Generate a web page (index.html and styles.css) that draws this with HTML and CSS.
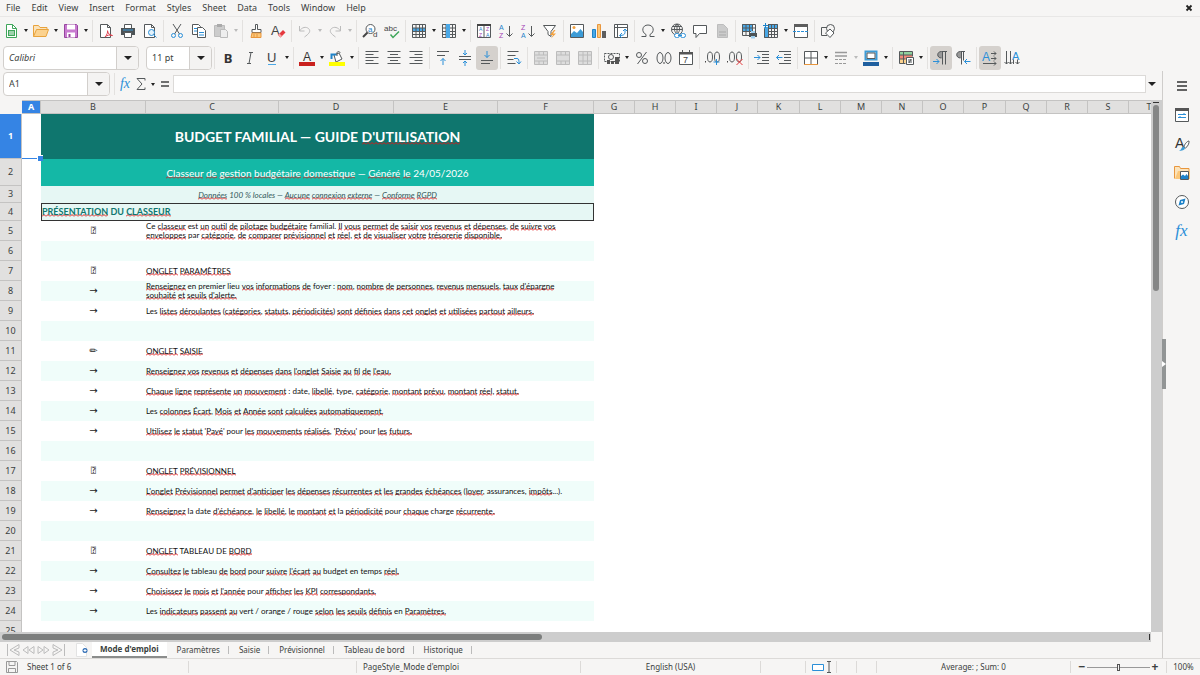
FILE: index.html
```html
<!DOCTYPE html>
<html lang="fr">
<head>
<meta charset="UTF-8" />
<meta name="viewport" content="width=device-width, initial-scale=1" />
<title>Budget familial - Mode d'emploi</title>
<link rel="stylesheet" href="styles.css">
</head>
<body>

<nav class="menubar">
  <button>File</button>
  <button>Edit</button>
  <button>View</button>
  <button>Insert</button>
  <button>Format</button>
  <button>Styles</button>
  <button>Sheet</button>
  <button>Data</button>
  <button>Tools</button>
  <button>Window</button>
  <button>Help</button>
  <button class="close" aria-label="Close">
    <svg viewBox="0 0 8 8" width="8" height="8"><path d="M1.5 1.5l5 5M6.5 1.5l-5 5" stroke="#222" stroke-width="1.8"/></svg>
  </button>
</nav>

<!-- Standard toolbar -->
<div class="toolbar">
  <button aria-label="New"><svg class="ico" viewBox="0 0 16 16"><path class="gr" d="M3.5 1.5h6l4 4v9h-10z" fill="#fff"/><path class="gr" d="M9.5 1.5v4h4"/><path d="M5 7h7v6H5z" fill="#3fa65a"/><path d="M6 9h5M6 11h5" stroke="#fff"/></svg></button>
  <button class="caret" aria-label="New menu"></button>
  <button aria-label="Open"><svg class="ico" viewBox="0 0 16 16"><path d="M.5 13.5v-11h5l1.5 2h7v3" fill="#fbe3bb" stroke="#e8a33d"/><path d="M.5 13.5l3-7h12l-2.5 7z" fill="#fbd28f" stroke="#e8a33d"/></svg></button>
  <button class="caret" aria-label="Open menu"></button>
  <button aria-label="Save"><svg class="ico" viewBox="0 0 16 16"><path d="M1.5 1.5h12l1 1v12h-13z" fill="#c87bd0" stroke="#97459f"/><path d="M4 1.5h8v5H4z" fill="#fff"/><path d="M4 9.5h8v5H4z" fill="#fff"/><path d="M5.5 11h2v3h-2z" fill="#97459f"/></svg></button>
  <button class="caret" aria-label="Save menu"></button>
  <span class="sep"></span>
  <button aria-label="Export as PDF"><svg class="ico" viewBox="0 0 16 16"><path class="k" d="M2.5 1.5h7l3 3v10h-10z" fill="#fff"/><path class="k" d="M9.5 1.5v3h3"/><path d="M7 14c2-2 3-5 2.5-6.5M9.5 8c.5 3 3 4.5 5 4.5M7 14c2-2 5-2.5 7.5-1.5" stroke="#e0414f"/></svg></button>
  <button aria-label="Print"><svg class="ico" viewBox="0 0 16 16"><path class="k" d="M4.5 5v-3.5h7V5" fill="#fff"/><path d="M1 5h14v7H1z" fill="#4d5356"/><path d="M3 7h10" stroke="#3c9bd6"/><path class="k" d="M4.5 9.5h7v5h-7z" fill="#fff"/></svg></button>
  <button aria-label="Print preview"><svg class="ico" viewBox="0 0 16 16"><path class="k" d="M2.5 1.5h7l3 3v10h-10z" fill="#fff"/><path class="k" d="M9.5 1.5v3h3"/><circle class="b" cx="9.5" cy="9.5" r="3" fill="#e4f2fb"/><path class="b" d="M11.5 11.5l3 3"/></svg></button>
  <span class="sep"></span>
  <button aria-label="Cut"><svg class="ico" viewBox="0 0 16 16"><path class="k" d="M4 1l6.5 10M12 1L5.5 11"/><circle class="b" cx="4.5" cy="12.5" r="2"/><circle class="b" cx="11.5" cy="12.5" r="2"/></svg></button>
  <button aria-label="Copy"><svg class="ico" viewBox="0 0 16 16"><path class="k" d="M1.5 1.5h6l2 2v8h-8z" fill="#fff"/><path class="k" d="M6.5 4.5h5l3 3v7h-8z" fill="#fff"/><path class="b" d="M3 5.5h3M3 8h3M8 9.5h5M8 12h5"/></svg></button>
  <button aria-label="Paste" disabled><svg class="ico" viewBox="0 0 16 16"><path d="M1.5 2.5h10v11h-10z" fill="#ccc" stroke="#bbb"/><path d="M4 1h5v3H4z" fill="#aaa"/><path d="M7.5 6.5h5l2 2v6h-7z" fill="#eee" stroke="#bbb"/></svg></button>
  <button class="caret off" aria-label="Paste menu" disabled></button>
  <span class="sep"></span>
  <button aria-label="Clone formatting"><svg class="ico" viewBox="0 0 16 16"><path class="k" d="M7.5 1.5h2v5h3.5v3H4v-3h3.5z" fill="#fff"/><path d="M4 10h9v4.5H3z" fill="#fbc77a" stroke="#e8963d"/><path d="M6 11v3M9 11v3" stroke="#e8963d"/></svg></button>
  <button aria-label="Clear formatting"><svg class="ico" viewBox="0 0 16 16"><text x="1" y="12" font-size="13" fill="#444">A</text><path d="M8 12l5-5 2.5 2.5-5 5z" fill="#e5383d"/><path d="M8 12l1.5-1.5L12 13l-1.5 1.5z" fill="#f4a3a6"/></svg></button>
  <span class="sep"></span>
  <button aria-label="Undo" disabled><svg class="ico" viewBox="0 0 16 16"><path class="g" d="M2.5 3v5h5M2.5 8C5 4 9 3.5 11.5 5.5c3 3 0 5.5-4 8.5"/></svg></button>
  <button class="caret off" aria-label="Undo list" disabled></button>
  <button aria-label="Redo" disabled><svg class="ico" viewBox="0 0 16 16"><path class="g" d="M13.5 3v5h-5M13.5 8C11 4 7 3.5 4.5 5.5c-3 3 0 5.5 4 8.5"/></svg></button>
  <button class="caret off" aria-label="Redo list" disabled></button>
  <span class="sep"></span>
  <button aria-label="Find and replace"><svg class="ico" viewBox="0 0 16 16"><circle class="k" cx="8.5" cy="6" r="4.5" fill="#fff"/><path d="M5.5 9.5L1 14" stroke="#444" stroke-width="2"/><text x="6" y="8.5" font-size="8" fill="#1f83c9">a</text><text x="11" y="14" font-size="8" fill="#444">d</text></svg></button>
  <button aria-label="Spelling"><svg class="ico" viewBox="0 0 16 16"><text x="0" y="8" font-size="8" fill="#444">abc</text><path d="M6.5 11.5l2.5 3 6-6" stroke="#3fa65a" stroke-width="1.5"/></svg></button>
  <span class="sep"></span>
  <button aria-label="Row"><svg class="ico" viewBox="0 0 16 16"><path d="M1 5h14v3H1z" fill="#4aa8e6"/><path class="k" d="M1.5 1.5h13v13h-13zM1.5 5h13M1.5 8.5h13M1.5 11.5h13M5 1.5v13M8.5 1.5v13M11.5 1.5v13"/></svg></button>
  <button class="caret" aria-label="Row menu"></button>
  <button aria-label="Column"><svg class="ico" viewBox="0 0 16 16"><path class="k" d="M1.5 1.5h13v13h-13zM1.5 5h13M1.5 8.5h13M1.5 11.5h13M5 1.5v13M11.5 1.5v13"/><path d="M5 1h4v14H5z" fill="#4aa8e6"/></svg></button>
  <button class="caret" aria-label="Column menu"></button>
  <span class="sep"></span>
  <button aria-label="Sort"><svg class="ico" viewBox="0 0 16 16"><path class="k" d="M1.5 1.5h13v13h-13z" fill="#fff"/><path d="M1 1h14v2H1z" fill="#444"/><path class="k" d="M8 3v11"/><text x="3" y="8" font-size="5" fill="#1f83c9">A</text><text x="3" y="14" font-size="5" fill="#a33fb5">Z</text><text x="10" y="8" font-size="5" fill="#a33fb5">Z</text><text x="10" y="14" font-size="5" fill="#1f83c9">A</text></svg></button>
  <button aria-label="Sort ascending"><svg class="ico" viewBox="0 0 16 16"><text x="1" y="7" font-size="7" fill="#1f83c9">A</text><text x="1" y="15" font-size="7" fill="#a33fb5">Z</text><path class="k" d="M11.5 3v10M8.5 10.5l3 3 3-3"/></svg></button>
  <button aria-label="Sort descending"><svg class="ico" viewBox="0 0 16 16"><text x="1" y="7" font-size="7" fill="#a33fb5">Z</text><text x="1" y="15" font-size="7" fill="#1f83c9">A</text><path class="k" d="M11.5 3v10M8.5 10.5l3 3 3-3"/></svg></button>
  <button aria-label="AutoFilter"><svg class="ico" viewBox="0 0 16 16"><path class="k" d="M1.5 2.5h12l-4.5 6v5l-3-2v-3z" fill="#fff"/><path d="M12 7l-4 5h3l-2 3.5 5-5h-3l2.5-3.5z" fill="#f2a03d"/></svg></button>
  <span class="sep"></span>
  <button aria-label="Insert image"><svg class="ico" viewBox="0 0 16 16"><path class="k" d="M1.5 1.5h13v13h-13z" fill="#fff"/><path d="M2 14v-3l3-3 3 2 3.5-4L14 9v5z" fill="#3c9bd6"/><circle cx="5" cy="4.5" r="1.5" fill="#f2a03d"/></svg></button>
  <button aria-label="Insert chart"><svg class="ico" viewBox="0 0 16 16"><path d="M1.5 6.5h3v8h-3z" fill="#4aa8e6" stroke="#1f83c9"/><path d="M6.5 1.5h3v13h-3z" fill="#fbc77a" stroke="#e8963d"/><path d="M11 8h4v7h-4z" fill="#5e5e5e"/></svg></button>
  <button aria-label="Pivot table"><svg class="ico" viewBox="0 0 16 16"><path class="k" d="M1.5 1.5h13v13h-13z" fill="#fff"/><path class="k" d="M1.5 4.5h13M4.5 1.5v13"/><path class="b" d="M12 6v3.5c0 2-2 3-5 3M10 8l2-2 2 2M9 10l-2.5 2.5L9 15"/></svg></button>
  <span class="sep"></span>
  <button aria-label="Special character"><svg class="ico" viewBox="0 0 16 16"><path class="k" d="M1.5 13.5h4.5v-2C1 9 2 2 8 2s7 7 2 9.5v2h4.5"/></svg></button>
  <button class="caret" aria-label="Special character menu"></button>
  <button aria-label="Hyperlink"><svg class="ico" viewBox="0 0 16 16"><circle class="k" cx="7" cy="6.5" r="5.5"/><path class="k" d="M1.5 6.5h11M2.5 3.5h9M7 1v10M7 1C3.5 4 3.5 8 7 11M7 1c3.5 3 3.5 7 0 10"/><rect x="4.5" y="10.5" width="5" height="4" rx="2" fill="#fff" stroke="#2a8fd8"/><rect x="10.5" y="10.5" width="5" height="4" rx="2" fill="#fff" stroke="#2a8fd8"/><path class="b" d="M8 12.5h4"/></svg></button>
  <button aria-label="Comment"><svg class="ico" viewBox="0 0 16 16"><path class="k" d="M1.5 2.5h13v8h-7l-3.5 4v-4H1.5z" fill="#fff"/></svg></button>
  <button aria-label="Headers and footers" disabled><svg class="ico" viewBox="0 0 16 16"><path d="M3.5 1.5h6l4 4v9h-10z" fill="#ccc" stroke="#bdbdbd"/><path d="M5 9h7M5 12h7" stroke="#aaa"/></svg></button>
  <span class="sep"></span>
  <button aria-label="Define print area"><svg class="ico" viewBox="0 0 16 16"><path d="M1 1h10v7H1z" fill="#4aa8e6"/><path class="k" d="M1.5 1.5h13v11h-13zM1.5 5h13M1.5 8.5h13M5 1.5v11M8.5 1.5v11M11.5 1.5v11"/><path d="M8 10h8v4H8z" fill="#4d5356"/><path d="M10 8h4v2h-4zM10 13h4v2.5h-4z" fill="#9fd0f0"/></svg></button>
  <button aria-label="Freeze rows and columns"><svg class="ico" viewBox="0 0 16 16"><path d="M1 4h4v11H1zM5 1h10v4H5z" fill="#4aa8e6"/><path class="k" d="M5.5 1.5h9v13h-13v-9M5 5.5h10M5 8.5h10M5 11.5h10M5.5 1v14M8.5 1v14M11.5 1v14"/><path d="M2.5 0v5M0 2.5h5" stroke="#1f83c9"/></svg></button>
  <button class="caret" aria-label="Freeze menu"></button>
  <button aria-label="Split window"><svg class="ico" viewBox="0 0 16 16"><path class="k" d="M1.5 1.5h13v13h-13z" fill="#fff"/><path d="M1 1h14v3H1z" fill="#5e5e5e"/><path class="b" d="M0 8.5h16" stroke-dasharray="3 1"/></svg></button>
  <span class="sep"></span>
  <button aria-label="Show draw functions"><svg class="ico" viewBox="0 0 16 16"><path class="k" d="M7 12.5H1.5v-8H7"/><circle class="k" cx="10.5" cy="5.5" r="4"/><path class="k" d="M10 6l4 4-4 4.5L5.5 10z" fill="#fff"/></svg></button>
</div>

<!-- Formatting toolbar -->
<div class="toolbar">
  <div class="combo combo-font">
    <input class="italic" type="text" value="Calibri" aria-label="Font name">
    <button aria-label="Font list"></button>
  </div>
  <div class="combo combo-size">
    <input type="text" value="11 pt" aria-label="Font size">
    <button aria-label="Size list"></button>
  </div>
  <span class="sep"></span>
  <button class="bold" aria-label="Bold">B</button>
  <button aria-label="Italic"><svg class="ico" viewBox="0 0 16 16"><path class="k" d="M7 2.5h4M5 13.5h4M9 2.5l-2 11"/></svg></button>
  <button aria-label="Underline"><svg class="ico" viewBox="0 0 16 16"><text x="3" y="12" font-size="13" fill="#444">U</text><path d="M4 14.5h8" stroke="#4aa8e6"/></svg></button>
  <button class="caret" aria-label="Underline menu"></button>
  <span class="sep"></span>
  <button aria-label="Font color"><svg class="ico" viewBox="0 0 16 16"><text x="4" y="11" font-size="12" fill="#333">A</text><path d="M0 12h16v4H0z" fill="#c9211e"/></svg></button>
  <button class="caret" aria-label="Font color menu"></button>
  <button aria-label="Highlighting"><svg class="ico" viewBox="0 0 16 16"><path class="k" d="M5 5l5-2 3 6-6 3z" fill="#fff"/><path d="M2.5 9V4.5h5" stroke="#1f83c9" stroke-width="2"/><path class="k" d="M8 6V3c0-2 3-2 3 0"/><path d="M0 12h16v4H0z" fill="#ff0"/></svg></button>
  <button class="caret" aria-label="Highlighting menu"></button>
  <span class="sep"></span>
  <button aria-label="Align left"><svg class="ico" viewBox="0 0 16 16"><path class="k" d="M1.5 1.5h13M1.5 4.5h8M1.5 7.5h13M1.5 10.5h8M1.5 13.5h13"/></svg></button>
  <button aria-label="Center"><svg class="ico" viewBox="0 0 16 16"><path class="k" d="M1.5 1.5h13M4 4.5h8M1.5 7.5h13M4 10.5h8M1.5 13.5h13"/></svg></button>
  <button aria-label="Align right"><svg class="ico" viewBox="0 0 16 16"><path class="k" d="M1.5 1.5h13M6.5 4.5h8M1.5 7.5h13M6.5 10.5h8M1.5 13.5h13"/></svg></button>
  <span class="sep"></span>
  <button aria-label="Align top"><svg class="ico" viewBox="0 0 16 16"><path class="k" d="M2 1.5h12M2 5.5h8"/><path class="b" d="M8 15V8.5M5.5 11L8 8.5l2.5 2.5"/></svg></button>
  <button aria-label="Center vertically"><svg class="ico" viewBox="0 0 16 16"><path class="k" d="M2 6.5h12M2 9.5h12"/><path class="b" d="M8 0v5M6 3l2 2 2-2M8 16v-5M6 13l2-2 2 2"/></svg></button>
  <button class="active" aria-label="Align bottom"><svg class="ico" viewBox="0 0 16 16"><path class="k" d="M2 10.5h12M2 13.5h9"/><path class="b" d="M8 1v6.5M5.5 5L8 7.5 10.5 5"/></svg></button>
  <span class="sep"></span>
  <button aria-label="Wrap text"><svg class="ico" viewBox="0 0 16 16"><path class="k" d="M1.5 1.5h11M1.5 5.5h8M1.5 9.5h6M1.5 13.5h8"/><path class="b" d="M8 8.5h3c2 0 2 2 2 5M10.5 11.5l2.5 2.5 2-2.5"/></svg></button>
  <span class="sep"></span>
  <button aria-label="Merge and center" disabled><svg class="ico" viewBox="0 0 16 16"><path class="g" d="M1.5 1.5h13v13h-13zM1.5 5h13M1.5 11h13M6 1.5V5M10.5 1.5V5M6 11v3.5M10.5 11v3.5" fill="#ddd"/><path class="g" d="M4 8h8"/></svg></button>
  <button aria-label="Merge cells" disabled><svg class="ico" viewBox="0 0 16 16"><path class="g" d="M1.5 1.5h13v13h-13zM1.5 5h13M1.5 11h13M6 1.5V5M10.5 1.5V5M6 11v3.5M10.5 11v3.5" fill="#ddd"/></svg></button>
  <button aria-label="Unmerge cells" disabled><svg class="ico" viewBox="0 0 16 16"><path class="g" d="M1.5 1.5h13v13h-13zM1.5 5h13M1.5 11h13M6 1.5v13M10.5 1.5v13" fill="#ddd"/></svg></button>
  <span class="sep"></span>
  <button aria-label="Currency"><svg class="ico" viewBox="0 0 16 16"><path class="k" d="M.5 3.5h15v8H.5z" stroke-dasharray="2 1"/><circle class="k" cx="7" cy="7" r="2.5"/><path d="M3 10h3v4H3zM7 11h3v3H7zM11 7h4v7h-4z" fill="#555"/></svg></button>
  <button class="caret" aria-label="Currency menu"></button>
  <button aria-label="Percent"><svg class="ico" viewBox="0 0 16 16"><circle class="k" cx="5" cy="5" r="2.5"/><circle class="k" cx="11" cy="11" r="2.5"/><path class="k" d="M12.5 2l-9 12"/></svg></button>
  <button aria-label="Number"><svg class="ico" viewBox="0 0 16 16"><ellipse class="k" cx="4" cy="8" rx="3" ry="5.5"/><ellipse class="k" cx="12" cy="8" rx="3" ry="5.5"/><path d="M7.5 12h1v2h-1z" fill="#444"/></svg></button>
  <button aria-label="Date"><svg class="ico" viewBox="0 0 16 16"><path class="k" d="M1.5 2.5h13v12h-13z" fill="#fff"/><path d="M1 2h14v2.5H1z" fill="#555"/><path class="k" d="M4.5 0v3M11.5 0v3"/><text x="5" y="13" font-size="9" fill="#444">7</text></svg></button>
  <span class="sep"></span>
  <button aria-label="Add decimal place"><svg class="ico" viewBox="0 0 16 16"><ellipse class="k" cx="5" cy="7" rx="2.5" ry="5"/><ellipse class="k" cx="12" cy="7" rx="2.5" ry="5"/><path d="M0 11h1v1.5H0z" fill="#444"/><path class="b" d="M11.5 9v6M8.5 12h6"/></svg></button>
  <button aria-label="Delete decimal place"><svg class="ico" viewBox="0 0 16 16"><ellipse class="k" cx="5" cy="7" rx="2.5" ry="5"/><ellipse class="k" cx="12" cy="7" rx="2.5" ry="5"/><path d="M0 11h1v1.5H0z" fill="#444"/><path d="M9.5 9l6 6M15.5 9l-6 6" stroke="#e5383d"/></svg></button>
  <span class="sep"></span>
  <button aria-label="Increase indent"><svg class="ico" viewBox="0 0 16 16"><path class="k" d="M3 1.5h12M8 4.5h7M8 7.5h7M8 10.5h7M3 13.5h12"/><path class="b" d="M0 7.5h6M3.5 5L6 7.5 3.5 10"/></svg></button>
  <button aria-label="Decrease indent"><svg class="ico" viewBox="0 0 16 16"><path class="k" d="M3 1.5h12M8 4.5h7M8 7.5h7M8 10.5h7M3 13.5h12"/><path class="b" d="M.5 7.5h6M3 5L.5 7.5 3 10"/></svg></button>
  <span class="sep"></span>
  <button aria-label="Borders"><svg class="ico" viewBox="0 0 16 16"><path class="k" d="M1.5 14V1.5h13V14M8 1.5V14M1.5 8h13" fill="#fff"/><path d="M1 14.5h14" stroke="#e8963d"/></svg></button>
  <button class="caret" aria-label="Borders menu"></button>
  <button aria-label="Border style" disabled><svg class="ico" viewBox="0 0 16 16"><path d="M2 2.5h12M2 6h12" stroke="#999" stroke-width="1.5"/><path d="M2 9.5h12M2 13.5h12" stroke="#999" stroke-dasharray="3 1"/></svg></button>
  <button class="caret off" aria-label="Border style menu" disabled></button>
  <button aria-label="Border color"><svg class="ico" viewBox="0 0 16 16"><path d="M2.5 1.5h11v8h-11z" fill="#fff" stroke="#3c9bd6" stroke-width="2"/><path class="k" d="M4 3h8v5.5H4z"/><path d="M0 12h16v4H0z" fill="#1f5f9f"/></svg></button>
  <button class="caret" aria-label="Border color menu"></button>
  <span class="sep"></span>
  <button aria-label="Conditional formatting"><svg class="ico" viewBox="0 0 16 16"><path d="M1 2h13v3H1z" fill="#8fd19e"/><path d="M1 5h13v4H1z" fill="#f08a7a"/><path d="M1 9h7v4H1z" fill="#fbd28f"/><path class="k" d="M1.5 1.5h13v5M1.5 1.5v12h6M1.5 5h13M1.5 9h6M5.5 1.5v12"/><path class="k" d="M8.5 7.5h7v7h-7z" fill="#fff"/><path class="k" d="M10 10h4M10 12h4M13 9l-2 4"/></svg></button>
  <button class="caret" aria-label="Conditional menu"></button>
  <span class="sep"></span>
  <button class="active" aria-label="Left to right"><svg class="ico" viewBox="0 0 16 16"><path d="M9 1.5C3 1.5 3 8 9 8z" fill="#999"/><path class="k" d="M14 1.5H8.5c-5 0-5 6.5 0 6.5M9.5 1.5v13M12.5 1.5v13"/><path class="b" d="M0 11.5h6M3.5 9L6 11.5 3.5 14"/></svg></button>
  <button aria-label="Right to left"><svg class="ico" viewBox="0 0 16 16"><path d="M6 1.5C0 1.5 0 8 6 8z" fill="#999"/><path class="k" d="M10 1.5H5.5c-5 0-5 6.5 0 6.5M6.5 1.5v13M8.5 1.5v9"/><path class="b" d="M9.5 11.5h6M12 9l-2.5 2.5L12 14"/></svg></button>
  <span class="sep"></span>
  <button class="active" aria-label="Horizontal text"><svg class="ico" viewBox="0 0 16 16"><text x="0" y="11" font-size="12" fill="#2a8fd8">A</text><path class="k" d="M9 3.5h5M9 8.5h5M1 13.5h13M12 1.5l2 2-2 2M12 6.5l2 2-2 2M12 11.5l2 2-2 2"/></svg></button>
  <button aria-label="Vertical text"><svg class="ico" viewBox="0 0 16 16"><text x="8" y="10" font-size="11" fill="#2a8fd8">A</text><path class="k" d="M2.5 1v13M6.5 1v13M13.5 9.5v4.5M9.5 9.5v4.5M.5 12l2 2 2-2M4.5 12l2 2 2-2M11.5 12l2 2 2-2"/></svg></button>
</div>

<div class="main">
  <div class="work">

    <div class="formulabar">
      <div class="combo combo-name">
        <input type="text" value="A1" aria-label="Name box">
        <button aria-label="Named ranges"></button>
      </div>
      <span class="sep"></span>
      <button class="fx" aria-label="Function wizard">fx</button>
      <button class="small" aria-label="Select function"><svg viewBox="0 0 10 14" width="10" height="14"><path class="k" d="M9 3.5V1.5H1l5 5.5-5 5.5h8v-2"/></svg></button>
      <button class="caret" aria-label="Function menu"></button>
      <button class="small" aria-label="Formula"><svg viewBox="0 0 10 14" width="10" height="14"><path d="M1 5h8M1 9h8" stroke="#444" stroke-width="1.5"/></svg></button>
      <input class="formula" type="text" aria-label="Input line">
      <button class="caret big" aria-label="Expand formula bar"></button>
    </div>

    <div class="gridrow">
      <div class="grid">
        <table class="sheet">
          <colgroup>
            <col class="c-head"><col class="c-a"><col class="c-b"><col class="c-c"><col class="c-d"><col class="c-e"><col class="c-f">
            <col class="c-n" span="4"><col class="c-w"><col class="c-n" span="4"><col class="c-w"><col class="c-n" span="4">
          </colgroup>
          <thead>
            <tr><td class="corner"></td><th class="sel">A</th><th>B</th><th>C</th><th>D</th><th>E</th><th>F</th><th>G</th><th>H</th><th>I</th><th>J</th><th>K</th><th>L</th><th>M</th><th>N</th><th>O</th><th>P</th><th>Q</th><th>R</th><th>S</th><th>T</th></tr>
          </thead>
          <tbody>
            <tr class="r1"><th class="sel">1</th><td class="cursor"></td><td class="title" colspan="5">BUDGET FAMILIAL — GUIDE <u>D'UTILISATION</u></td></tr>
            <tr class="r2"><th>2</th><td></td><td class="subtitle" colspan="5"><u>Classeur</u> <u>de</u> <u>gestion</u> <u>budgétaire</u> <u>domestique</u> — <u>Généré</u> <u>le</u> 24/05/2026</td></tr>
            <tr class="r3"><th>3</th><td></td><td class="note" colspan="5"><u>Données</u> 100 % locales — <u>Aucune</u> <u>connexion</u> <u>externe</u> — <u>Conforme</u> <u>RGPD</u></td></tr>
            <tr class="r4"><th>4</th><td></td><td class="section" colspan="5"><u>PRÉSENTATION</u> DU <u>CLASSEUR</u></td></tr>
            <tr><th>5</th><td></td><td class="mark box">⍰</td><td class="text" colspan="4">Ce <u>classeur</u> est <u>un</u> <u>outil</u> <u>de</u> <u>pilotage</u> <u>budgétaire</u> familial. <u>Il</u> <u>vous</u> <u>permet</u> <u>de</u> <u>saisir</u> <u>vos</u> <u>revenus</u> <u>et</u> <u>dépenses</u>, <u>de</u> <u>suivre</u> <u>vos</u><br><u>enveloppes</u> par <u>catégorie</u>, <u>de</u> <u>comparer</u> <u>prévisionnel</u> <u>et</u> <u>réel</u>, <u>et</u> <u>de</u> <u>visualiser</u> <u>votre</u> <u>trésorerie</u> <u>disponible.</u></td></tr>
            <tr class="tint"><th>6</th><td></td><td></td><td colspan="4"></td></tr>
            <tr><th>7</th><td></td><td class="mark box">⍰</td><td class="text" colspan="4"><u>ONGLET</u> <u>PARAMÈTRES</u></td></tr>
            <tr class="tint"><th>8</th><td></td><td class="mark">→</td><td class="text" colspan="4"><u>Renseignez</u> en premier lieu <u>vos</u> <u>informations</u> <u>de</u> foyer : <u>nom</u>, <u>nombre</u> <u>de</u> <u>personnes</u>, <u>revenus</u> <u>mensuels</u>, <u>taux</u> <u>d'épargne</u><br><u>souhaité</u> <u>et</u> <u>seuils</u> <u>d'alerte.</u></td></tr>
            <tr><th>9</th><td></td><td class="mark">→</td><td class="text" colspan="4">Les <u>listes</u> <u>déroulantes</u> (<u>catégories</u>, <u>statuts</u>, <u>périodicités</u>) <u>sont</u> <u>définies</u> <u>dans</u> <u>cet</u> <u>onglet</u> <u>et</u> <u>utilisées</u> <u>partout</u> <u>ailleurs.</u></td></tr>
            <tr class="tint"><th>10</th><td></td><td></td><td colspan="4"></td></tr>
            <tr><th>11</th><td></td><td class="mark">✏</td><td class="text" colspan="4"><u>ONGLET</u> <u>SAISIE</u></td></tr>
            <tr class="tint"><th>12</th><td></td><td class="mark">→</td><td class="text" colspan="4"><u>Renseignez</u> <u>vos</u> <u>revenus</u> <u>et</u> <u>dépenses</u> <u>dans</u> <u>l'onglet</u> <u>Saisie</u> <u>au</u> <u>fil</u> <u>de</u> <u>l'eau.</u></td></tr>
            <tr><th>13</th><td></td><td class="mark">→</td><td class="text" colspan="4"><u>Chaque</u> <u>ligne</u> <u>représente</u> <u>un</u> <u>mouvement</u> : date, <u>libellé</u>, type, <u>catégorie</u>, <u>montant</u> <u>prévu</u>, <u>montant</u> <u>réel</u>, <u>statut.</u></td></tr>
            <tr class="tint"><th>14</th><td></td><td class="mark">→</td><td class="text" colspan="4">Les <u>colonnes</u> <u>Écart</u>, <u>Mois</u> <u>et</u> <u>Année</u> <u>sont</u> <u>calculées</u> <u>automatiquement.</u></td></tr>
            <tr><th>15</th><td></td><td class="mark">→</td><td class="text" colspan="4"><u>Utilisez</u> <u>le</u> <u>statut</u> '<u>Payé</u>' pour <u>les</u> <u>mouvements</u> <u>réalisés</u>, '<u>Prévu</u>' pour <u>les</u> <u>futurs.</u></td></tr>
            <tr class="tint"><th>16</th><td></td><td></td><td colspan="4"></td></tr>
            <tr><th>17</th><td></td><td class="mark box">⍰</td><td class="text" colspan="4"><u>ONGLET</u> <u>PRÉVISIONNEL</u></td></tr>
            <tr class="tint"><th>18</th><td></td><td class="mark">→</td><td class="text" colspan="4"><u>L'onglet</u> <u>Prévisionnel</u> <u>permet</u> <u>d'anticiper</u> <u>les</u> <u>dépenses</u> <u>récurrentes</u> <u>et</u> <u>les</u> <u>grandes</u> <u>échéances</u> (<u>loyer</u>, assurances, <u>impôts</u>...).</td></tr>
            <tr><th>19</th><td></td><td class="mark">→</td><td class="text" colspan="4"><u>Renseignez</u> la date <u>d'échéance</u>, <u>le</u> <u>libellé</u>, <u>le</u> <u>montant</u> <u>et</u> la <u>périodicité</u> pour <u>chaque</u> charge <u>récurrente.</u></td></tr>
            <tr class="tint"><th>20</th><td></td><td></td><td colspan="4"></td></tr>
            <tr><th>21</th><td></td><td class="mark box">⍰</td><td class="text" colspan="4"><u>ONGLET</u> TABLEAU DE <u>BORD</u></td></tr>
            <tr class="tint"><th>22</th><td></td><td class="mark">→</td><td class="text" colspan="4"><u>Consultez</u> <u>le</u> tableau <u>de</u> <u>bord</u> pour <u>suivre</u> <u>l'écart</u> <u>au</u> budget en temps <u>réel.</u></td></tr>
            <tr><th>23</th><td></td><td class="mark">→</td><td class="text" colspan="4"><u>Choisissez</u> <u>le</u> <u>mois</u> <u>et</u> <u>l'année</u> pour <u>afficher</u> <u>les</u> <u>KPI</u> <u>correspondants.</u></td></tr>
            <tr class="tint"><th>24</th><td></td><td class="mark">→</td><td class="text" colspan="4">Les <u>indicateurs</u> <u>passent</u> <u>au</u> vert / orange / rouge <u>selon</u> <u>les</u> <u>seuils</u> <u>définis</u> en <u>Paramètres.</u></td></tr>
            <tr><th>25</th><td></td><td></td><td colspan="4"></td></tr>
          </tbody>
        </table>
      </div>
      <div class="vscroll"><div class="thumb"></div></div>
    </div>

    <div class="hscroll"><div class="thumb"></div></div>

    <div class="tabs">
      <button class="nav" aria-label="First sheet" disabled><svg viewBox="0 0 15 14" width="15" height="14"><path class="g" d="M1.5 1v12M13 1.5L4 7l9 5.5V9L8 7l5-2z"/></svg></button>
      <button class="nav" aria-label="Previous sheet" disabled><svg viewBox="0 0 15 14" width="15" height="14"><path class="g" d="M7 3.5L2 7l5 3.5zM13 3.5L8 7l5 3.5z"/></svg></button>
      <button class="nav" aria-label="Next sheet" disabled><svg viewBox="0 0 15 14" width="15" height="14"><path class="g" d="M2 3.5L7 7l-5 3.5zM8 3.5L13 7l-5 3.5z"/></svg></button>
      <button class="nav" aria-label="Last sheet" disabled><svg viewBox="0 0 15 14" width="15" height="14"><path class="g" d="M13.5 1v12M2 1.5L11 7l-9 5.5V9l5-2-5-2z"/></svg></button>
      <button class="add" aria-label="Add sheet"><svg viewBox="0 0 12 14" width="12" height="14"><path d="M.5.5h6l4 4v9H.5z" fill="#fff" stroke="#e3e3e3"/><circle cx="9" cy="7.5" r="2.5" fill="#2f6db5"/><path d="M9 6v3M7.5 7.5h3" stroke="#fff"/></svg></button>
      <button class="tab current">Mode d'emploi</button>
      <button class="tab">Paramètres</button>
      <button class="tab">Saisie</button>
      <button class="tab">Prévisionnel</button>
      <button class="tab">Tableau de bord</button>
      <button class="tab">Historique</button>
    </div>
  </div>

  <div class="sidebar">
    <button aria-label="Sidebar settings"><svg class="ico" viewBox="0 0 16 16"><path d="M3 4h10M3 8h10M3 12h10" stroke="#333" stroke-width="1.5"/></svg></button>
    <button aria-label="Properties"><svg class="ico" viewBox="0 0 16 16"><path class="k" d="M1.5 1.5h13v13h-13z" fill="#fff"/><path d="M1 1h14v3H1z" fill="#555"/><path class="b" d="M4 7.5h8M4 10.5h8M9.5 6l1.5 1.5M6.5 9L5 10.5"/></svg></button>
    <button aria-label="Styles"><svg class="ico" viewBox="0 0 16 16"><text x="1" y="12" font-size="14" fill="#333">A</text><path class="k" d="M15 5c-2 0-5 4-5 6l1.5 1c2-1 4-5 3.5-7z" fill="#fff"/><path d="M5 14.5c2 .5 6 0 6-2.5L9.5 10.5C7 11 8 14 5 14.5z" fill="#3c9bd6"/></svg></button>
    <button aria-label="Gallery"><svg class="ico" viewBox="0 0 16 16"><path d="M.5 13.5v-12h5l1 2h8.5v3" fill="#fbe3bb" stroke="#e8963d"/><path d="M1 14l3-8h12v8z" fill="#fbc77a"/><path class="k" d="M6.5 6.5h8v8h-8z" fill="#fff"/><path d="M7 14v-3l2-1.5 2 1.5 1.5-2L14 11v3z" fill="#1f83c9"/></svg></button>
    <button aria-label="Navigator"><svg class="ico" viewBox="0 0 16 16"><circle class="k" cx="8" cy="8" r="6.5" fill="#fff"/><path d="M11.5 4.5L10 10l-5.5 1.5L6 6z" fill="#1f83c9"/><circle cx="8" cy="8" r="1" fill="#fff"/></svg></button>
    <button class="fx" aria-label="Functions">fx</button>
    <div class="handle"><svg viewBox="0 0 4 6" width="4" height="6"><path d="M0 0l4 3-4 3z" fill="#fff"/></svg></div>
  </div>
</div>

<footer class="statusbar">
  <svg class="doc" viewBox="0 0 12 12" width="12" height="12"><path d="M.5.5h10l1 1v10H.5z" stroke="#999"/><path d="M3 .5h6v4H3zM2.5 7.5h7v4h-7z" stroke="#999"/></svg>
  <span class="cell count">Sheet 1 of 6</span>
  <span class="cell blank"></span>
  <span class="cell page">PageStyle_Mode d'emploi</span>
  <span class="cell lang">English (USA)</span>
  <span class="cell gap"></span>
  <span class="cell mode"><svg viewBox="0 0 20 12" width="20" height="12"><path d="M.5 3.5h11v6H.5z" stroke="#2a8fd8" fill="#fff"/><path class="k" d="M15 .5h4M15 11.5h4M17 .5v11"/></svg></span>
  <span class="cell tiny"></span>
  <span class="cell tiny"></span>
  <span class="cell sum">Average: ; Sum: 0</span>
  <span class="cell zoom">
    <button aria-label="Zoom out">−</button>
    <input type="range" min="0" max="100" value="50" aria-label="Zoom">
    <button aria-label="Zoom in">+</button>
  </span>
  <span class="percent">100%</span>
</footer>

</body>
</html>
```

FILE: styles.css
```css
* {
  box-sizing: border-box;
}
body {
  margin: 0;
  height: 100vh;
  display: flex;
  flex-direction: column;
  overflow: hidden;
  background: #f6f5f4;
  color: #3b3f40;
  font: 9px/12px "Noto Sans", sans-serif;
}
button,
input {
  font: inherit;
  color: inherit;
  margin: 0;
  padding: 0;
  border: none;
  background: none;
}
svg {
  display: block;
  fill: none;
  font-family: "Liberation Sans", sans-serif;
}
.k { stroke: #55595b; }
.b { stroke: #2a8fd8; }
.g { stroke: #bcbcbc; }
.gr { stroke: #3fa65a; }

/* menu */
.menubar {
  display: flex;
  align-items: center;
  height: 17px;
  flex: none;
  padding: 0 7px 0 6px;
  gap: 11px;
  border-bottom: 1px solid #e8e7e6;
}
.close {
  margin-left: auto;
}

/* toolbars */
.toolbar {
  display: flex;
  align-items: center;
  height: 27px;
  flex: none;
}
.toolbar > button {
  width: 22px;
  height: 24px;
  flex: none;
  display: flex;
  align-items: center;
  justify-content: center;
  border-radius: 3px;
}
.toolbar > .active {
  background: #d5d1cd;
}
.toolbar > .bold {
  font-size: 13px;
  font-weight: bold;
  color: #333;
}
.ico {
  width: 16px;
  height: 16px;
}
.toolbar > .caret,
.caret {
  width: 8px;
  height: 24px;
  flex: none;
  display: flex;
  align-items: center;
  justify-content: center;
}
.caret::before,
.combo button::before {
  content: "";
  border: 2px solid transparent;
  border-top: 3px solid #222;
  border-bottom: none;
}
.caret.off::before {
  border-top-color: #bbb;
}
.caret.big::before,
.combo button::before {
  border-width: 4px 4px 0;
}
.sep {
  width: 1px;
  height: 22px;
  flex: none;
  margin: 0 2px;
  background: #e3e1df;
}

.combo {
  display: flex;
  flex: none;
  height: 24px;
  border: 1px solid #d2cfcc;
  border-radius: 4px;
  background: #fff;
  overflow: hidden;
}
.combo input {
  flex: 1;
  min-width: 0;
  padding: 0 5px;
}
.combo button {
  width: 22px;
  display: flex;
  align-items: center;
  justify-content: center;
  border-left: 1px solid #d2cfcc;
  background: #f4f3f2;
}
.combo-font {
  width: 136px;
  margin: 0 7px 0 3px;
}
.combo-size {
  width: 66px;
}
.combo-name {
  width: 107px;
  margin: 0 2px 0 3px;
}
.italic { font-style: italic; }

/* main area */
.main {
  flex: 1;
  min-height: 0;
  display: flex;
}
.work {
  flex: 1;
  min-width: 0;
  display: flex;
  flex-direction: column;
}
.formulabar {
  display: flex;
  align-items: center;
  height: 29px;
  flex: none;
  padding: 0 6px 3px 0;
}
.small {
  width: 16px;
  display: flex;
  justify-content: center;
}
.fx {
  width: 16px;
  font: italic 14px/16px "Liberation Serif", serif;
  color: #2a8fd8;
}
.formula {
  flex: 1;
  min-width: 0;
  height: 18px;
  margin-right: 2px;
  border: 1px solid #dcdad8;
  background: #fff;
}

.gridrow {
  flex: 1;
  min-height: 0;
  display: flex;
}
.grid {
  flex: 1;
  min-width: 0;
  overflow: hidden;
  background: #fff;
}
.sheet {
  width: 1170px;
  table-layout: fixed;
  border-collapse: separate;
  border-spacing: 0;
}
.c-head { width: 22px; }
.c-a { width: 19px; }
.c-b { width: 105px; }
.c-c { width: 133px; }
.c-d { width: 115px; }
.c-e { width: 104px; }
.c-f { width: 96px; }
.c-n { width: 41px; }
.c-w { width: 42px; }
.sheet td {
  padding: 0;
  white-space: nowrap;
}
.sheet th {
  padding: 0;
  font-weight: normal;
  background: #e1e0df;
  border-right: 1px solid #c4c3c2;
  border-bottom: 1px solid #c4c3c2;
}
.sheet thead th {
  height: 14px;
  border-top: 1px solid #c4c3c2;
}
.sheet .corner {
  background: #f6f5f4;
}
.sheet .sel {
  background: #3584e4;
  color: #fff;
  font-weight: bold;
}
.sheet tbody tr { height: 20px; }
.sheet .r1 { height: 45px; }
.sheet .r2 { height: 27px; }
.sheet .r3 { height: 17px; }
.sheet .r4 { height: 18px; }

.sheet .cursor {
  position: relative;
  border-bottom: 1px solid #3584e4;
}
.cursor::after {
  content: "";
  position: absolute;
  right: -2px;
  bottom: -3px;
  width: 5px;
  height: 5px;
  background: #3584e4;
  border: 1px solid #fff;
  border-width: 1px 0 0 1px;
}
.title,
.subtitle,
.note,
.section,
.text {
  font-family: Lato, sans-serif;
}
.title {
  background: #0f766e;
  color: #fff;
  text-align: center;
  font-size: 14px;
  font-weight: bold;
}
.subtitle {
  background: #14b8a6;
  color: #fff;
  text-align: center;
  font-size: 10px;
}
.note {
  background: #e6f7f4;
  color: #33575a;
  text-align: center;
  font-size: 8px;
  font-style: italic;
}
.section {
  background: #e6f7f4;
  color: #0f766e;
  border: 1px solid #333;
  font-size: 9px;
  font-weight: bold;
}
.mark {
  text-align: center;
  color: #222;
  font: 10px/12px "DejaVu Sans", sans-serif;
}
.box {
  font: 8px/12px "DejaVu Sans Mono", monospace;
}
.text {
  color: #111;
  font-size: 8px;
  line-height: 9px;
}
.tint td:nth-child(n+3) {
  background: #f0fdfa;
}
/* spell check mark under a word */
u {
  text-decoration: none;
  background: url("data:image/svg+xml,%3Csvg xmlns='http://www.w3.org/2000/svg' width='4' height='3'%3E%3Cpath d='M0 2.5L2 .5L4 2.5' fill='none' stroke='%23dd1515'/%3E%3C/svg%3E") repeat-x left bottom / 4px 3px;
}

/* scrollbars */
.vscroll {
  width: 11px;
  flex: none;
  padding: 2px 3px 0 2px;
  background: #cdcdcd;
}
.vscroll::before {
  content: "";
  display: block;
  height: 1px;
  margin-bottom: 2px;
  background: #333;
}
.vscroll .thumb {
  height: 35%;
  border-radius: 3px;
  background: #858686;
}
.hscroll {
  display: flex;
  justify-content: space-between;
  flex: none;
  height: 10px;
  margin-right: 11px;
  padding: 2px 1px 2px 2px;
  background: #cdcdcd;
}
.hscroll::after {
  content: "";
  width: 1px;
  background: #333;
}
.hscroll .thumb {
  width: 47%;
  height: 6px;
  border-radius: 3px;
  background: #7c7e7d;
}

/* sheet tabs */
.tabs {
  display: flex;
  flex: none;
  height: 16px;
  padding-left: 6px;
  font-size: 8px;
}
.nav {
  width: 15px;
}
.add {
  width: 26px;
  padding-left: 10px;
}
.tab {
  padding: 0 9px 0 10px;
  position: relative;
}
.tab:not(.current)::after {
  content: "";
  position: absolute;
  right: 0;
  top: 4px;
  height: 8px;
  border-right: 1px solid #bbb;
}
.current {
  padding: 0 8px;
  background: #fff;
  font-weight: bold;
  border-bottom: 2px solid #8b8d8c;
}

/* sidebar */
.sidebar {
  width: 38px;
  flex: none;
  position: relative;
  display: flex;
  flex-direction: column;
  align-items: center;
  border-left: 1px solid #cfcdcb;
}
.sidebar button {
  width: 24px;
  height: 29px;
  display: flex;
  align-items: center;
  justify-content: center;
}
.sidebar .fx {
  font-size: 17px;
}
.handle {
  position: absolute;
  left: -1px;
  top: 268px;
  width: 4px;
  height: 50px;
  display: flex;
  align-items: center;
  background: #929595;
}

/* status bar */
.statusbar {
  display: flex;
  align-items: center;
  flex: none;
  height: 17px;
  padding-left: 6px;
  border-top: 1px solid #dcdad8;
  font-size: 8px;
}
.doc {
  flex: none;
  margin-right: 4px;
}
.cell {
  height: 12px;
  padding: 0 6px;
  border-right: 1px solid #dcdad8;
}
.count {
  flex: 1 1 167px;
  padding-left: 5px;
}
.blank { flex: 1 1 168px; }
.page { flex: 1 1 224px; }
.lang { flex: 1 1 180px; text-align: center; }
.gap { flex: 1 1 45px; }
.mode { width: 31px; }
.tiny { width: 20px; }
.sum { flex: 1 1 194px; text-align: center; }
.zoom {
  width: 96px;
  display: flex;
  align-items: center;
}
.zoom button {
  width: 10px;
  font-weight: bold;
  font-size: 12px;
}
.zoom input {
  appearance: none;
  flex: 1;
  min-width: 0;
  height: 8px;
  background: linear-gradient(#999, #999) center / 100% 1px no-repeat;
}
.zoom input::-webkit-slider-thumb {
  appearance: none;
  width: 3px;
  height: 7px;
  border: 1px solid #555;
  background: #f6f5f4;
}
.percent {
  width: 33px;
  text-align: center;
}
```
